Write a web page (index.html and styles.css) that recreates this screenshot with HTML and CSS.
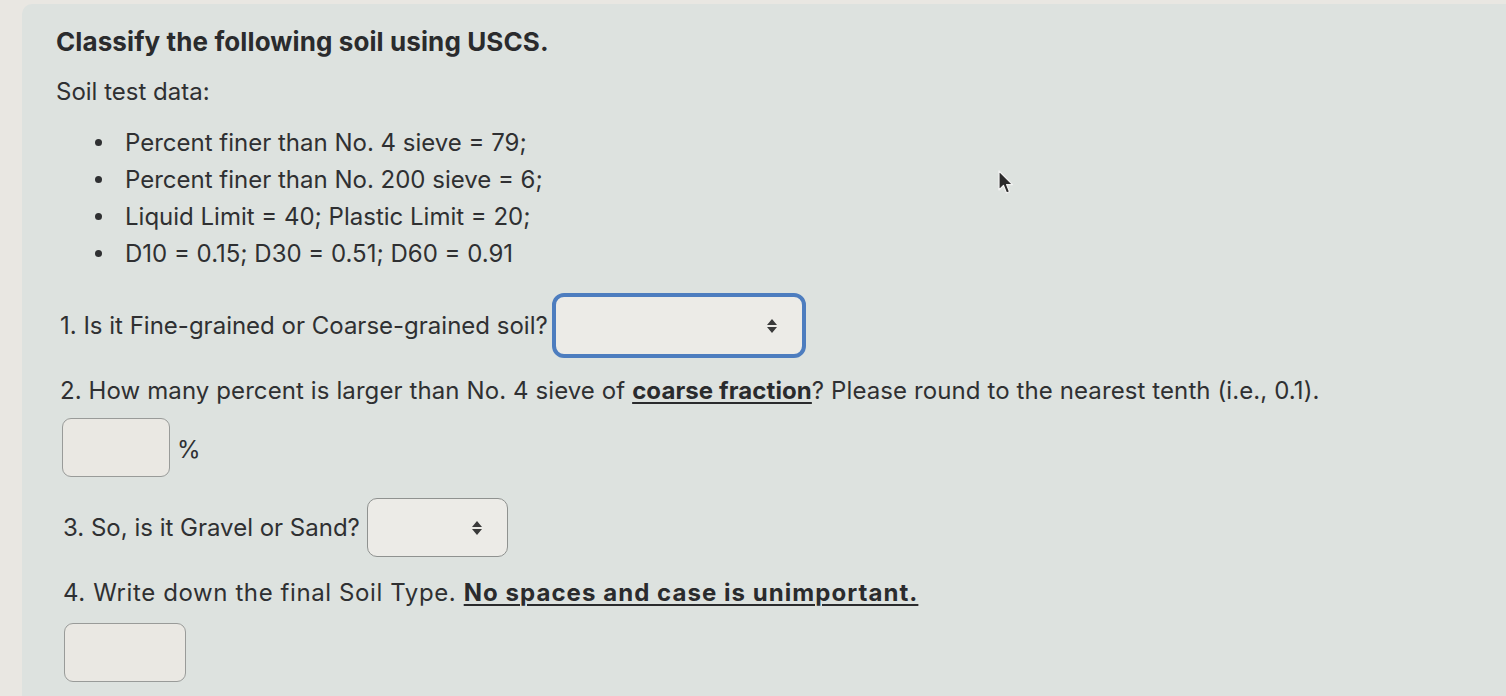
FILE: index.html
```html
<!DOCTYPE html>
<html>
<head>
<meta charset="utf-8">
<link rel="stylesheet" href="styles.css">
</head>
<body>
<main class="panel">
  <h1 class="title">Classify the following soil using USCS.</h1>
  <p class="lead">Soil test data:</p>
  <ul class="data">
    <li>Percent finer than No. 4 sieve = 79;</li>
    <li>Percent finer than No. 200 sieve = 6;</li>
    <li>Liquid Limit = 40; Plastic Limit = 20;</li>
    <li>D10 = 0.15; D30 = 0.51; D60 = 0.91</li>
  </ul>

  <div class="row q1">
    <span class="qtext">1. Is it Fine-grained or Coarse-grained soil?</span>
    <div class="select select-focus">
      <svg class="arrows" width="12" height="16" viewBox="0 0 12 16"><path d="M6 1 L11 7 L1 7 Z M6 15 L11 9 L1 9 Z" fill="#3a3a3a"/></svg>
    </div>
  </div>

  <p class="qtext q2">2. How many percent is larger than No. 4 sieve of <b class="ul">coarse fraction</b>? Please round to the nearest tenth (i.e., 0.1).</p>

  <div class="row q2in">
    <div class="input input-a"></div>
    <span class="unit">%</span>
  </div>

  <div class="row q3">
    <span class="qtext">3. So, is it Gravel or Sand?</span>
    <div class="select select-plain">
      <svg class="arrows" width="12" height="16" viewBox="0 0 12 16"><path d="M6 1 L11 7 L1 7 Z M6 15 L11 9 L1 9 Z" fill="#3a3a3a"/></svg>
    </div>
  </div>

  <p class="qtext q4">4. Write down the final Soil Type. <b class="ul wide">No spaces and case is unimportant.</b></p>

  <div class="row q4in">
    <div class="input input-b"></div>
  </div>

  <svg class="cursor" width="18" height="26" viewBox="0 0 18 26"><path d="M2 1 L2 20 L6.5 15.5 L9.5 23 L12.5 21.8 L9.6 14.6 L15.5 14.6 Z" fill="#2b2b2b" stroke="#f2f2f2" stroke-width="1.2" stroke-linejoin="round"/></svg>
</main>
</body>
</html>
```

FILE: styles.css
```css
html, body {
  margin: 0;
  padding: 0;
  height: 100%;
}
body {
  background: #e9e7e2;
  font-family: Inter, "Noto Sans", "Liberation Sans", sans-serif;
  color: #2f3032;
  overflow: hidden;
}
.panel {
  position: relative;
  margin: 4px 0 0 22px;
  min-height: 692px;
  box-sizing: border-box;
  background: #dde2df;
  border-top-left-radius: 10px;
  padding: 23px 0 0 34px;
}
.title {
  margin: 0;
  font-size: 26px;
  line-height: 30px;
  font-weight: 700;
  letter-spacing: 0.1px;
  color: #2a2b2d;
}
.lead {
  margin: 20px 0 0 0;
  font-size: 24px;
  line-height: 30px;
}
.data {
  margin: 17px 0 0 0;
  padding: 0 0 0 69px;
  list-style: none;
  font-size: 24px;
  line-height: 37px;
}
.data li {
  position: relative;
}
.data li::before {
  content: "";
  position: absolute;
  left: -30px;
  top: 15px;
  width: 7px;
  height: 7px;
  border-radius: 50%;
  background: #2f3032;
}
.row {
  display: flex;
  align-items: center;
}
.qtext {
  font-size: 24px;
  line-height: 30px;
}
.q1 {
  margin: 21px 0 0 4px;
  gap: 4px;
}
.select {
  box-sizing: border-box;
  position: relative;
  display: flex;
  align-items: center;
  justify-content: flex-end;
  background: #ecebe7;
}
.select-focus {
  width: 254px;
  height: 65px;
  border: 4px solid #4d7dbf;
  border-radius: 12px;
  padding-right: 24px;
}
.select-plain {
  width: 141px;
  height: 59px;
  border: 1.5px solid #8f9290;
  border-radius: 10px;
  padding-right: 24px;
}
.q2 {
  margin: 18px 0 0 4px;
  letter-spacing: 0.1px;
}
.ul {
  font-weight: 700;
  text-decoration: underline;
  text-underline-offset: 3px;
  text-decoration-thickness: 2px;
  color: #2a2b2d;
}
.q2in {
  margin: 12px 0 0 6px;
  gap: 7px;
}
.input {
  box-sizing: border-box;
  background: #eae8e3;
  border: 1.5px solid #999b99;
  border-radius: 9px;
}
.input-a {
  width: 108px;
  height: 59px;
}
.unit {
  font-size: 24px;
  line-height: 30px;
  margin-top: 5px;
}
.q3 {
  margin: 21px 0 0 7px;
  gap: 7px;
}
.q4 {
  margin: 21px 0 0 7px;
  letter-spacing: 0.6px;
}
.q4 .wide {
  letter-spacing: 1.05px;
}
.q4in {
  margin: 15px 0 0 8px;
}
.input-b {
  width: 122px;
  height: 59px;
}
.cursor {
  position: absolute;
  left: 975px;
  top: 166px;
}
```
